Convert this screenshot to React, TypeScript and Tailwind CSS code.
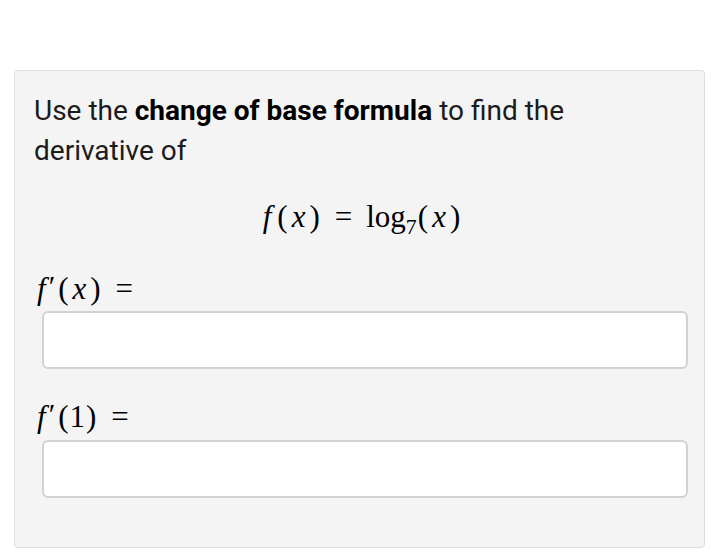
import React from "react";

const math = "font-['Liberation_Serif','DejaVu_Serif',serif] text-[31px] leading-[40px] text-black";
const box = "ml-[8px] block h-[58px] w-[646px] rounded-[6px] border-2 border-[#d2d2d2] bg-white";

function V({ c }: { c: string }) {
  return <i className="px-[3px]">{c}</i>;
}

function P({ c }: { c: string }) {
  return <span className="px-[1px]">{c}</span>;
}

function Eq() {
  return <span className="mx-[14px]">=</span>;
}

function FPrime({ arg }: { arg: React.ReactNode }) {
  return (
    <>
      <i className="pl-[3px]">f</i>
      <span className="relative -top-[3px] ml-[3px] mr-[2px] text-[30px]">′</span>
      <P c="(" />
      {arg}
      <P c=")" />
    </>
  );
}

export default function App() {
  return (
    <div className="min-h-[552px] bg-white pt-[70px] pl-[14px] pr-[15px] font-['Roboto','Liberation_Sans',sans-serif]">
      <div className="rounded-[4px] border border-[#dedede] bg-[#f4f4f4] px-[19px] pt-[20px] pb-[49px]">
        <p className="w-[600px] text-[28px] leading-[40px] text-[#1b1b1b]">
          Use the <b className="font-bold text-black">change of base formula</b> to find the derivative of
        </p>

        <div className={`${math} mt-[26px] text-center`}>
          <i className="px-[5px]">f</i>
          <P c="(" />
          <V c="x" />
          <P c=")" />
          <Eq />
          log<sub className="relative top-[7px] align-baseline text-[22px]">7</sub>
          <P c="(" />
          <V c="x" />
          <P c=")" />
        </div>

        <div className={`${math} mt-[32px]`}>
          <FPrime arg={<V c="x" />} />
          <Eq />
        </div>
        <input className={`${box} mt-[2px]`} />

        <div className={`${math} mt-[28px]`}>
          <FPrime arg={<span>1</span>} />
          <Eq />
        </div>
        <input className={`${box} mt-[3px]`} />
      </div>
    </div>
  );
}
